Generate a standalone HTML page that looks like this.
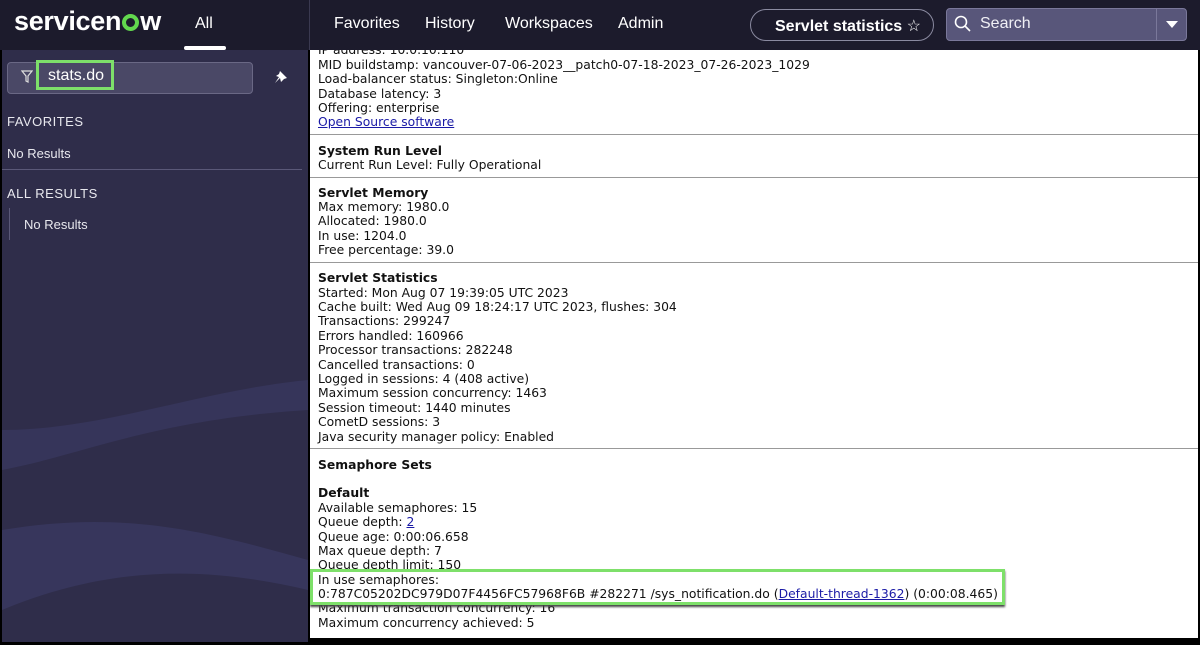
<!DOCTYPE html>
<html><head><meta charset="utf-8"><style>
*{margin:0;padding:0;box-sizing:border-box}
body{width:1200px;height:645px;overflow:hidden;background:#000;position:relative;font-family:"Liberation Sans",sans-serif}
#top{position:absolute;left:0;top:0;width:1200px;height:50px;background:#1c1b2c}
#side{position:absolute;left:2px;top:50px;width:306px;height:592px;background:#2f2d4a;overflow:hidden}
#main{position:absolute;left:310px;top:50px;width:888px;height:588px;background:#fff;overflow:hidden}
.l{position:absolute;left:8px;font-family:"DejaVu Sans",sans-serif;font-size:12.35px;color:#111;white-space:nowrap;line-height:14px}
.b{font-weight:bold}
a{color:#1a1aa6;text-decoration:underline}
.sep{position:absolute;left:0;width:888px;height:1px;background:#999}
.nav{position:absolute;top:15px;color:#fff;font-size:16px}
.st{position:absolute;color:#e8e8ee;font-size:13px;letter-spacing:.5px}
</style></head><body>
<div id="top">
 <div style="position:absolute;left:14px;top:6px;color:#fff;font-size:27px;font-weight:bold;letter-spacing:-0.3px">servicen<span style="display:inline-block;width:17px;height:17px;border:4px solid #62d84e;border-radius:50%;vertical-align:-1px;margin:0 1px"></span>w</div>
 <div class="nav" style="left:195px">All</div>
 <div style="position:absolute;left:184px;top:46px;width:42px;height:4px;background:#fff;border-radius:2px"></div>
 <div style="position:absolute;left:309px;top:0;width:1px;height:50px;background:#3a3950"></div>
 <div class="nav" style="left:334px">Favorites</div>
 <div class="nav" style="left:425px">History</div>
 <div class="nav" style="left:505px">Workspaces</div>
 <div class="nav" style="left:618px">Admin</div>
 <div style="position:absolute;left:750px;top:9px;width:184px;height:32px;border:1px solid #8a8aa0;border-radius:16px;color:#fff;font-size:16px;font-weight:bold;padding:6px 0 0 24px">Servlet statistics <span style="font-weight:normal;font-size:16px">☆</span></div>
 <div style="position:absolute;left:946px;top:8px;width:241px;height:33px;background:#58567a;border:1px solid #7a789a;border-radius:4px"></div>
 <svg style="position:absolute;left:954px;top:15px" width="18" height="18"><circle cx="7" cy="7" r="5.5" fill="none" stroke="#fff" stroke-width="1.6"/><line x1="11" y1="11" x2="16" y2="16" stroke="#fff" stroke-width="1.6"/></svg>
 <div class="nav" style="left:980px;color:#f0f0f5">Search</div>
 <div style="position:absolute;left:1156px;top:8px;width:1px;height:33px;background:#7a789a"></div>
 <div style="position:absolute;left:1166px;top:21px;width:0;height:0;border-left:6px solid transparent;border-right:6px solid transparent;border-top:7px solid #fff"></div>
</div>
<div id="side">
 <svg style="position:absolute;left:0;top:0" width="306" height="592">
  <path d="M0 420 C80 405 150 370 306 360 L306 330 C200 340 100 380 0 380Z" fill="#36355a"/>
  <path d="M0 480 C120 460 200 480 306 510 L306 540 C220 520 120 510 0 560Z" fill="#37365c"/>
 </svg>
 <div style="position:absolute;left:5px;top:12px;width:246px;height:32px;background:#4a4866;border:1px solid #6a6885;border-radius:4px"></div>
 <svg style="position:absolute;left:19px;top:20px" width="12" height="14"><path d="M1 1 H11 L7 6 V12 L5 11 V6 Z" fill="none" stroke="#ddd" stroke-width="1.2"/></svg>
 <div style="position:absolute;left:34px;top:10px;width:78px;height:30px;border:3px solid #7ee06a"></div>
 <div style="position:absolute;left:46px;top:17px;color:#fff;font-size:16px">stats.do</div>
 <svg style="position:absolute;left:272px;top:20px" width="14" height="14"><path d="M6 1 L13 8 L10 9 L7 12 L6 8 L1 13 L5 7 L2 6 L5 4 Z" fill="#fff"/></svg>
 <div class="st" style="left:5px;top:64px">FAVORITES</div>
 <div style="position:absolute;left:5px;top:96px;color:#e8e8ee;font-size:13px">No Results</div>
 <div style="position:absolute;left:0;top:119px;width:300px;height:1px;background:#5a5878"></div>
 <div class="st" style="left:5px;top:136px">ALL RESULTS</div>
 <div style="position:absolute;left:7px;top:158px;width:1px;height:32px;background:#5a5878"></div>
 <div style="position:absolute;left:22px;top:167px;color:#e8e8ee;font-size:13px">No Results</div>
</div>
<div id="main">
<div class="l" style="top:-7px">IP address: 10.0.10.110</div>
<div class="l" style="top:8px">MID buildstamp: vancouver-07-06-2023__patch0-07-18-2023_07-26-2023_1029</div>
<div class="l" style="top:22px">Load-balancer status: Singleton:Online</div>
<div class="l" style="top:37px">Database latency: 3</div>
<div class="l" style="top:51px">Offering: enterprise</div>
<div class="l" style="top:65px"><a>Open Source software</a></div>
<div class="sep" style="top:84px"></div>
<div class="l b" style="top:94px">System Run Level</div>
<div class="l" style="top:108px">Current Run Level: Fully Operational</div>
<div class="sep" style="top:127px"></div>
<div class="l b" style="top:136px">Servlet Memory</div>
<div class="l" style="top:150px">Max memory: 1980.0</div>
<div class="l" style="top:164px">Allocated: 1980.0</div>
<div class="l" style="top:179px">In use: 1204.0</div>
<div class="l" style="top:193px">Free percentage: 39.0</div>
<div class="sep" style="top:212px"></div>
<div class="l b" style="top:221px">Servlet Statistics</div>
<div class="l" style="top:236px">Started: Mon Aug 07 19:39:05 UTC 2023</div>
<div class="l" style="top:250px">Cache built: Wed Aug 09 18:24:17 UTC 2023, flushes: 304</div>
<div class="l" style="top:264px">Transactions: 299247</div>
<div class="l" style="top:279px">Errors handled: 160966</div>
<div class="l" style="top:293px">Processor transactions: 282248</div>
<div class="l" style="top:308px">Cancelled transactions: 0</div>
<div class="l" style="top:322px">Logged in sessions: 4 (408 active)</div>
<div class="l" style="top:336px">Maximum session concurrency: 1463</div>
<div class="l" style="top:351px">Session timeout: 1440 minutes</div>
<div class="l" style="top:365px">CometD sessions: 3</div>
<div class="l" style="top:380px">Java security manager policy: Enabled</div>
<div class="sep" style="top:398px"></div>
<div class="l b" style="top:408px">Semaphore Sets</div>
<div class="l b" style="top:436px">Default</div>
<div class="l" style="top:451px">Available semaphores: 15</div>
<div class="l" style="top:465px">Queue depth: <a>2</a></div>
<div class="l" style="top:480px">Queue age: 0:00:06.658</div>
<div class="l" style="top:494px">Max queue depth: 7</div>
<div class="l" style="top:508px">Queue depth limit: 150</div>
<div class="l" style="top:523px">In use semaphores:</div>
<div class="l" style="top:537px">0:787C05202DC979D07F4456FC57968F6B #282271 /sys_notification.do (<a>Default-thread-1362</a>) (0:00:08.465)</div>
<div class="l" style="top:551px">Maximum transaction concurrency: 16</div>
<div class="l" style="top:566px">Maximum concurrency achieved: 5</div>
<div style="position:absolute;left:0;top:519px;width:695px;height:36px;border:3px solid #7ee06a;box-shadow:0 2px 2px #444"></div>
</div>
</body></html>
